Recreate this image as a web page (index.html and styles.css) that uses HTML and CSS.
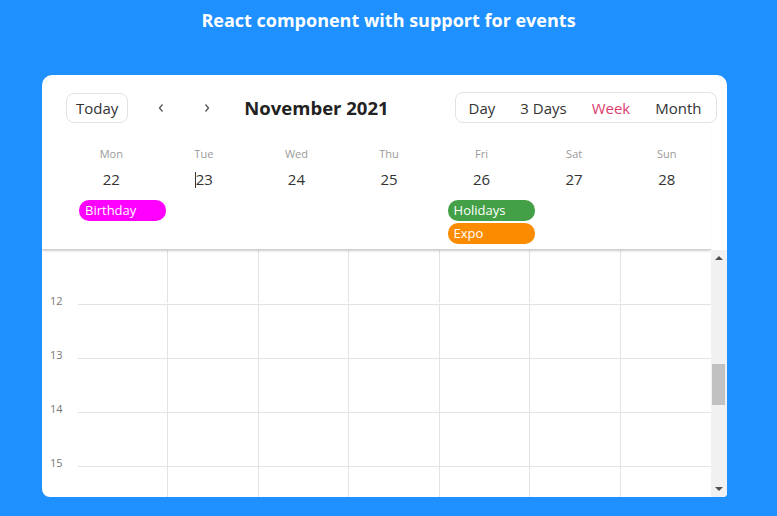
FILE: index.html
```html
<!DOCTYPE html>
<html lang="en">
<head>
  <meta charset="UTF-8" />
  <meta name="viewport" content="width=device-width, initial-scale=1.0" />
  <title>Calendar</title>
  <link rel="stylesheet" href="styles.css">
</head>
<body>
  <h1 class="title">React component with support for events</h1>

  <div class="calendar">
    <div class="toolbar">
      <button class="today-btn">Today</button>
      <button class="nav-btn">
        <svg width="8" height="10" viewBox="0 0 8 10"><path d="M5.5 1.5 L2.5 5 L5.5 8.5" fill="none" stroke="#555" stroke-width="1.3"/></svg>
      </button>
      <button class="nav-btn">
        <svg width="8" height="10" viewBox="0 0 8 10"><path d="M2.5 1.5 L5.5 5 L2.5 8.5" fill="none" stroke="#555" stroke-width="1.3"/></svg>
      </button>
      <h2 class="month-title">November 2021</h2>
      <div class="views">
        <span class="view">Day</span>
        <span class="view">3 Days</span>
        <span class="view active">Week</span>
        <span class="view">Month</span>
      </div>
    </div>

    <div class="head">
      <div class="week-head">
        <div class="day"><div class="day-name">Mon</div><div class="day-num">22</div></div>
        <div class="day"><div class="day-name">Tue</div><div class="day-num"><span class="caret"></span>23</div></div>
        <div class="day"><div class="day-name">Wed</div><div class="day-num">24</div></div>
        <div class="day"><div class="day-name">Thu</div><div class="day-num">25</div></div>
        <div class="day"><div class="day-name">Fri</div><div class="day-num">26</div></div>
        <div class="day"><div class="day-name">Sat</div><div class="day-num">27</div></div>
        <div class="day"><div class="day-name">Sun</div><div class="day-num">28</div></div>
      </div>
      <div class="all-day">
        <div class="slot"><div class="event birthday">Birthday</div></div>
        <div class="slot"></div>
        <div class="slot"></div>
        <div class="slot"></div>
        <div class="slot">
          <div class="event holidays">Holidays</div>
          <div class="event expo">Expo</div>
        </div>
        <div class="slot"></div>
        <div class="slot"></div>
      </div>
    </div>

    <div class="body">
      <div class="time-grid">
        <div class="hour first"></div>
        <div class="cell first"></div><div class="cell first"></div><div class="cell first"></div><div class="cell first"></div><div class="cell first"></div><div class="cell first"></div><div class="cell first"></div>

        <div class="hour"><span>12</span></div>
        <div class="cell"></div><div class="cell"></div><div class="cell"></div><div class="cell"></div><div class="cell"></div><div class="cell"></div><div class="cell"></div>

        <div class="hour"><span>13</span></div>
        <div class="cell"></div><div class="cell"></div><div class="cell"></div><div class="cell"></div><div class="cell"></div><div class="cell"></div><div class="cell"></div>

        <div class="hour"><span>14</span></div>
        <div class="cell"></div><div class="cell"></div><div class="cell"></div><div class="cell"></div><div class="cell"></div><div class="cell"></div><div class="cell"></div>

        <div class="hour"><span>15</span></div>
        <div class="cell"></div><div class="cell"></div><div class="cell"></div><div class="cell"></div><div class="cell"></div><div class="cell"></div><div class="cell"></div>
      </div>
      <div class="scrollbar">
        <div class="arrow up"></div>
        <div class="track"><div class="thumb"></div></div>
        <div class="arrow down"></div>
      </div>
    </div>
  </div>
</body>
</html>
```

FILE: styles.css
```css
body {
  margin: 0;
  background-color: #1e90ff;
  font-family: 'Open Sans', 'Noto Sans', sans-serif;
  color: #333;
}
.title {
  margin: 0;
  padding-top: 8px;
  text-align: center;
  font-size: 18px;
  line-height: 24px;
  font-weight: 700;
  color: #fff;
}
.calendar {
  margin: 43px 0 0 42px;
  width: 685px;
  height: 422px;
  background-color: #fff;
  border-radius: 10px 10px 4px 8px;
  overflow: hidden;
  display: flex;
  flex-direction: column;
}

/* toolbar */
.toolbar {
  display: flex;
  align-items: center;
  padding: 17px 10px 0 24px;
}
.today-btn {
  height: 30px;
  padding: 0 9px;
  font-family: inherit;
  font-size: 15px;
  color: #333;
  background: #fff;
  border: 1px solid #e2e2e2;
  border-radius: 8px;
}
.nav-btn {
  width: 30px;
  height: 30px;
  padding: 0;
  border: none;
  background: none;
  display: flex;
  align-items: center;
  justify-content: center;
}
.today-btn + .nav-btn {
  margin-left: 18px;
  margin-right: 16px;
}
.month-title {
  margin: 0 0 0 22px;
  font-size: 18.5px;
  font-weight: 700;
  color: #222;
}
.views {
  margin-left: auto;
  display: flex;
  align-items: center;
  height: 29px;
  border: 1px solid #e2e2e2;
  border-radius: 8px;
  padding: 0 2px 0 0;
}
.view {
  padding: 0 12.5px;
  font-size: 15px;
}
.view.active {
  color: #dc3c6e;
}

/* week header */
.head {
  position: relative;
  z-index: 1;
  margin-right: 16px;
  padding: 23px 0 5px 23px;
  border-bottom: 1px solid #cfcfcf;
  box-shadow: 0 2px 2px -1px rgba(0, 0, 0, 0.2);
}
.week-head, .all-day {
  display: grid;
  grid-template-columns: repeat(7, 1fr);
  margin-right: -2px;
}
.day {
  text-align: center;
}
.day-name {
  font-size: 11px;
  line-height: 16px;
  color: #9a9a9a;
}
.day-num {
  margin-top: 6px;
  font-size: 15px;
  line-height: 22px;
}
.caret {
  display: inline-block;
  width: 1px;
  height: 16px;
  background: #333;
  vertical-align: -3px;
}
.all-day {
  margin-top: 10px;
}
.slot {
  display: flex;
  flex-direction: column;
  gap: 2px;
}
.event {
  width: 81px;
  height: 21px;
  margin-left: 14px;
  padding-left: 6px;
  border-radius: 10px;
  font-size: 13px;
  line-height: 21px;
  color: #fff;
}
.birthday { background-color: #ff00ff; }
.holidays { background-color: #43a047; }
.expo { background-color: #fb8c00; }

/* time grid */
.body {
  flex: 1;
  display: flex;
  overflow: hidden;
}
.time-grid {
  flex: 1;
  display: grid;
  grid-template-columns: 36px repeat(7, 1fr);
  grid-auto-rows: 54px;
  align-content: start;
  overflow: hidden;
}
.time-grid .first {
  height: 53px;
}
.cell {
  border-top: 1px solid #e3e3e3;
  border-right: 1px solid #e3e3e3;
}
.cell.first {
  border-top: none;
}
.cell:nth-child(8n) {
  border-right: none;
}
.hour span {
  display: block;
  margin-top: -10px;
  padding-left: 8px;
  font-size: 11px;
  line-height: 14px;
  color: #777;
}

/* scrollbar */
.scrollbar {
  width: 16px;
  background-color: #f1f1f1;
  display: flex;
  flex-direction: column;
}
.arrow {
  height: 16px;
  display: flex;
  align-items: center;
  justify-content: center;
}
.arrow::before {
  content: "";
  border-left: 4px solid transparent;
  border-right: 4px solid transparent;
}
.arrow.up::before {
  border-bottom: 4px solid #505050;
}
.arrow.down::before {
  border-top: 4px solid #505050;
}
.track {
  flex: 1;
}
.thumb {
  margin: 98px 2px 0 1px;
  height: 41px;
  background-color: #c1c1c1;
}
```
